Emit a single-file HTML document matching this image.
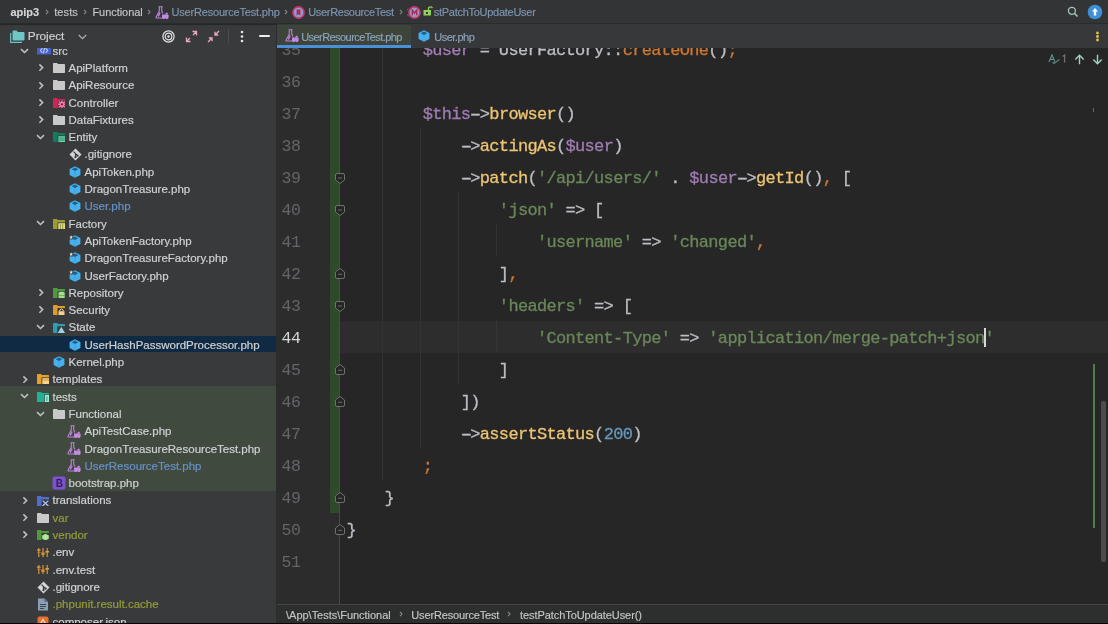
<!DOCTYPE html>
<html><head><meta charset="utf-8">
<style>
*{margin:0;padding:0;box-sizing:border-box}
html,body{width:1108px;height:624px;overflow:hidden;background:#262626;font-family:"Liberation Sans",sans-serif}
.abs{position:absolute}
svg{display:block}
.row{width:277px;height:17.3px}
.tt{position:absolute;top:1px;white-space:pre;font-size:11.5px;line-height:17.3px;-webkit-text-stroke:0.2px currentColor}
.code{position:absolute;left:69.5px;white-space:pre;font-family:"Liberation Mono",monospace;font-size:17px;letter-spacing:-0.68px;line-height:32px;padding-top:3px;-webkit-text-stroke:0.3px currentColor}
.ln{position:absolute;left:4.6px;white-space:pre;font-family:"Liberation Mono",monospace;font-size:16.5px;letter-spacing:-0.44px;line-height:32px;padding-top:3px}
.lg{display:inline-block;transform:scaleX(1.75)}
.caret{display:inline-block;width:1.5px;height:19px;background:#d8d8d8;vertical-align:-4px;margin-right:-1.5px}
.tb{position:absolute;z-index:5;white-space:pre;-webkit-text-stroke:0.15px currentColor;font-size:11px;line-height:14px;color:#c4c6c8}
</style></head><body><div style="position:absolute;left:0;top:0;width:1108px;height:624px;overflow:hidden;will-change:transform">
<!-- top breadcrumb bar -->
<div class="abs" style="left:0;top:0;width:1108px;height:24px;background:#333436;border-bottom:1px solid #2a2b2c"></div>
<div class="tb" style="left:10.4px;top:5.4px;font-size:11px;font-weight:bold;color:#d4d6d8;letter-spacing:-0.009px">apip3</div><div class="tb" style="left:54.2px;top:5.4px;font-size:11px;font-weight:normal;color:#c4c6c8;letter-spacing:0.091px">tests</div><div class="tb" style="left:92.4px;top:5.4px;font-size:11px;font-weight:normal;color:#c4c6c8;letter-spacing:-0.041px">Functional</div><div class="tb" style="left:171.5px;top:5.4px;font-size:11px;font-weight:normal;color:#7f96b0;letter-spacing:-0.189px">UserResourceTest.php</div><div class="tb" style="left:308.2px;top:5.4px;font-size:11px;font-weight:normal;color:#7f96b0;letter-spacing:-0.306px">UserResourceTest</div><div class="tb" style="left:433.8px;top:5.4px;font-size:11px;font-weight:normal;color:#7f96b0;letter-spacing:-0.278px">stPatchToUpdateUser</div><div class="tb" style="left:27.8px;top:29.4px;font-size:11.8px;font-weight:normal;color:#d2d4d6;letter-spacing:-0.036px">Project</div><div class="tb" style="left:301.2px;top:29.5px;font-size:11px;font-weight:normal;color:#8ea3bb;letter-spacing:-0.563px">UserResourceTest.php</div><div class="tb" style="left:434.2px;top:29.5px;font-size:11px;font-weight:normal;color:#8ea3bb;letter-spacing:-0.490px">User.php</div><div class="tb" style="left:286.1px;top:607.5px;font-size:11px;font-weight:normal;color:#c4c6c8;letter-spacing:-0.029px">\App\Tests\Functional</div><div class="tb" style="left:411.3px;top:607.5px;font-size:11px;font-weight:normal;color:#c4c6c8;letter-spacing:-0.159px">UserResourceTest</div><div class="tb" style="left:520px;top:607.5px;font-size:11px;font-weight:normal;color:#c4c6c8;letter-spacing:-0.068px">testPatchToUpdateUser()</div>
<svg class="abs" style="left:44.8px;top:9px" width="4" height="6" viewBox="0 0 4 6"><path d="M1 0.8 L3 3 L1 5.2" stroke="#8a8c8e" stroke-width="1.1" fill="none"/></svg>
<svg class="abs" style="left:82.5px;top:9px" width="4" height="6" viewBox="0 0 4 6"><path d="M1 0.8 L3 3 L1 5.2" stroke="#8a8c8e" stroke-width="1.1" fill="none"/></svg>
<svg class="abs" style="left:147px;top:9px" width="4" height="6" viewBox="0 0 4 6"><path d="M1 0.8 L3 3 L1 5.2" stroke="#8a8c8e" stroke-width="1.1" fill="none"/></svg>
<div class="abs" style="left:155px;top:6px;line-height:0"><svg width="14" height="13" viewBox="0 0 14 13"><path d="M3.5 0.8 H7.5 M4.3 0.8 V5 L1 11.2 Q0.8 12 1.6 12 H7" stroke="#b783d8" stroke-width="1.1" fill="none"/><path d="M6.7 0.8 V5 L8 7.5" stroke="#b783d8" stroke-width="1.1" fill="none"/><path d="M2.6 9.5 L4.8 5.8 L5.6 7.4 L3.5 11.3 Z" fill="#b783d8"/><path d="M7 8.4 H12.6 Q13.6 8.4 13.6 9.6 V11.4 Q13.6 12.4 12.6 12.4 H7 Z" fill="#c38ae0"/><circle cx="8.6" cy="12.2" r="1" fill="#c38ae0"/><circle cx="12" cy="12.2" r="1" fill="#c38ae0"/><path d="M10 8.4 L11 6.8 H12.4 L13.2 8.4" fill="#c38ae0"/></svg></div>
<svg class="abs" style="left:284.4px;top:9px" width="4" height="6" viewBox="0 0 4 6"><path d="M1 0.8 L3 3 L1 5.2" stroke="#8a8c8e" stroke-width="1.1" fill="none"/></svg>
<div class="abs" style="left:292px;top:6px;line-height:0"><svg width="13" height="13" viewBox="0 0 13 13"><circle cx="6.5" cy="6.5" r="5.6" fill="#8f9bd0" stroke="#c8386a" stroke-width="1.6"/><path d="M4.6 3.4 H8.4 V9.6 L6.5 8.2 L4.6 9.6 Z" fill="#b02a50"/></svg></div>
<svg class="abs" style="left:399px;top:9px" width="4" height="6" viewBox="0 0 4 6"><path d="M1 0.8 L3 3 L1 5.2" stroke="#8a8c8e" stroke-width="1.1" fill="none"/></svg>
<div class="abs" style="left:407px;top:6px;line-height:0"><svg width="14" height="13" viewBox="0 0 14 13"><path d="M1.2 2.5 L0.4 4.5 M0.6 8 L1.3 10.2" stroke="#c8386a" stroke-width="1"/><circle cx="7.5" cy="6.5" r="5.6" fill="#8f9bd0" stroke="#c8386a" stroke-width="1.6"/><path d="M5.3 9.2 V4.2 L7.5 7 L9.7 4.2 V9.2" stroke="#b02a50" stroke-width="1.4" fill="none"/></svg></div>
<div class="abs" style="left:423px;top:5px;line-height:0"><svg width="10" height="11" viewBox="0 0 10 11"><rect x="0.5" y="5" width="7.5" height="5.5" fill="#8fcf5a"/><path d="M5.5 5 V3 Q7.5 0.6 9.5 3" stroke="#8fcf5a" stroke-width="1.3" fill="none"/><rect x="3" y="7" width="2" height="2" fill="#36373a"/></svg></div>
<svg class="abs" style="left:1066px;top:5px" width="14" height="14" viewBox="0 0 14 14"><circle cx="5.9" cy="5.8" r="3.5" stroke="#9fc4bd" stroke-width="1.3" fill="none"/><path d="M8.5 8.4 L11.6 11.5" stroke="#9fc4bd" stroke-width="1.5"/></svg>
<svg class="abs" style="left:1087px;top:4px" width="16" height="16" viewBox="0 0 16 16"><circle cx="8" cy="8" r="7.3" fill="#3d8fd8"/><path d="M8 4 L11 7.4 H9.2 V11.5 H6.8 V7.4 H5 Z" fill="#ffffff"/></svg>

<!-- project header -->
<div class="abs" style="left:0;top:25px;width:277px;height:23px;background:#393a3c"></div>
<svg class="abs" style="left:10px;top:30px" width="15" height="13" viewBox="0 0 15 13"><path d="M0.7 3 V12.3 H12" stroke="#6ec6c6" stroke-width="1.2" fill="none"/><path d="M2.5 1.5 Q2.5 0.6 3.4 0.6 H6.6 L7.8 2 H13.6 Q14.5 2 14.5 2.9 V9.6 Q14.5 10.5 13.6 10.5 H3.4 Q2.5 10.5 2.5 9.6 Z" fill="#6ec6c6"/></svg>
<svg class="abs" style="left:78px;top:34px" width="9" height="6" viewBox="0 0 9 6"><path d="M0.8 1 L4.5 4.7 L8.2 1" stroke="#b0b2b4" stroke-width="1.2" fill="none"/></svg>
<svg class="abs" style="left:162px;top:30px" width="13" height="13" viewBox="0 0 13 13"><circle cx="6.5" cy="6.5" r="5.6" stroke="#e4e4e4" stroke-width="1.2" fill="none"/><circle cx="6.5" cy="6.5" r="3.3" stroke="#e4e4e4" stroke-width="1.2" fill="none"/><circle cx="6.5" cy="6.5" r="1.2" fill="#e4e4e4"/></svg>
<svg class="abs" style="left:185px;top:30px" width="13" height="13" viewBox="0 0 13 13"><path d="M1.5 11.5 L5 8 M1.5 7.5 V11.5 H5.5 M11.5 1.5 L8 5 M7.5 1.5 H11.5 V5.5" stroke="#e9a7bd" stroke-width="1.3" fill="none"/></svg>
<svg class="abs" style="left:207px;top:30px" width="13" height="13" viewBox="0 0 13 13"><path d="M1 12 L5 8 M1.8 8 H5 V11.2 M12 1 L8 5 M8 1.8 V5 H11.2" stroke="#e9a7bd" stroke-width="1.3" fill="none"/></svg>
<div class="abs" style="left:228px;top:29px;width:1px;height:14px;background:#4a4c4e"></div>
<svg class="abs" style="left:240px;top:30px" width="4" height="13" viewBox="0 0 4 13"><circle cx="2" cy="2" r="1.3" fill="#e6e6e6"/><circle cx="2" cy="6.5" r="1.3" fill="#e6e6e6"/><circle cx="2" cy="11" r="1.3" fill="#e6e6e6"/></svg>
<div class="abs" style="left:259px;top:35px;width:11px;height:2.4px;border-radius:1px;background:#eeeeee"></div>

<!-- tabs bar -->
<div class="abs" style="left:277px;top:24px;width:831px;height:24px;background:#37383a"></div>
<div class="abs" style="left:277px;top:25px;width:134px;height:23px;background:#3d4439"></div>
<div class="abs" style="left:277px;top:45.3px;width:134px;height:2.7px;background:#4a8fd8"></div>
<div class="abs" style="left:285px;top:29px;line-height:0"><svg width="14" height="13" viewBox="0 0 14 13"><path d="M3.5 0.8 H7.5 M4.3 0.8 V5 L1 11.2 Q0.8 12 1.6 12 H7" stroke="#b783d8" stroke-width="1.1" fill="none"/><path d="M6.7 0.8 V5 L8 7.5" stroke="#b783d8" stroke-width="1.1" fill="none"/><path d="M2.6 9.5 L4.8 5.8 L5.6 7.4 L3.5 11.3 Z" fill="#b783d8"/><path d="M7 8.4 H12.6 Q13.6 8.4 13.6 9.6 V11.4 Q13.6 12.4 12.6 12.4 H7 Z" fill="#c38ae0"/><circle cx="8.6" cy="12.2" r="1" fill="#c38ae0"/><circle cx="12" cy="12.2" r="1" fill="#c38ae0"/><path d="M10 8.4 L11 6.8 H12.4 L13.2 8.4" fill="#c38ae0"/></svg></div>
<div class="abs" style="left:418px;top:30px;line-height:0"><svg width="12" height="12" viewBox="0 0 12 12"><path d="M6 0.3 L11.4 3.1 V8.9 L6 11.7 L0.6 8.9 V3.1 Z" fill="#46b1ec"/><path d="M6 1.6 L9.2 3.3 L6 5 L2.8 3.3 Z" fill="#1c5e8c"/><path d="M6 5 V11.5" stroke="#3a9ad6" stroke-width="0.7"/></svg></div>
<svg class="abs" style="left:1095px;top:31px" width="5" height="11" viewBox="0 0 5 11"><circle cx="2.5" cy="2" r="1.4" fill="#e3c43c"/><circle cx="2.5" cy="5.5" r="1.4" fill="#e3c43c"/><circle cx="2.5" cy="9" r="1.4" fill="#e3c43c"/></svg>

<!-- project tree -->
<div class="abs" style="left:0;top:48px;width:277px;height:576px;background:#393a3c;overflow:hidden">
<div class="abs" style="left:0;top:338.30px;width:276px;height:105.10px;background:#404a3f"></div><div class="abs" style="left:0;top:288.10px;width:276px;height:16.2px;background:#0f2a42"></div><div class="abs row" style="left:0;top:-6.40px"><div class="abs" style="left:19.700000000000003px;top:5.9px"><svg width="9" height="6" viewBox="0 0 9 6"><path d="M1 1.1 L4.5 4.5 L8 1.1" stroke="#bfc1c3" stroke-width="1.5" fill="none"/></svg></div><div class="abs" style="left:36.8px;top:4.70px;line-height:0"><svg width="14" height="9" viewBox="0 0 14 9"><path d="M0 0.5 H14 V8.5 H0 Z" fill="#4760c8"/><path d="M5.4 2 L3.4 4.5 L5.4 7 M8.6 2 L10.6 4.5 L8.6 7 M7.6 1.6 L6.4 7.4" stroke="#c3cfff" stroke-width="1.1" fill="none"/></svg></div><div class="tt" style="left:52.5px;color:#cfd1d3">src</div></div><div class="abs row" style="left:0;top:10.90px"><div class="abs" style="left:36.8px;top:4.4px"><svg width="8" height="9" viewBox="0 0 8 9"><path d="M2.4 1.4 L5.7 4.6 L2.4 7.8" stroke="#bfc1c3" stroke-width="1.5" fill="none"/></svg></div><div class="abs" style="left:52.8px;top:4.20px;line-height:0"><svg width="12" height="10" viewBox="0 0 12 10"><path d="M0 0.7 Q0 0 0.7 0 H4 L5 1.1 H11.3 Q12 1.1 12 1.8 V9.3 Q12 10 11.3 10 H0.7 Q0 10 0 9.3 Z" fill="#c9c9c9"/></svg></div><div class="tt" style="left:68.5px;color:#cfd1d3">ApiPlatform</div></div><div class="abs row" style="left:0;top:28.20px"><div class="abs" style="left:36.8px;top:4.4px"><svg width="8" height="9" viewBox="0 0 8 9"><path d="M2.4 1.4 L5.7 4.6 L2.4 7.8" stroke="#bfc1c3" stroke-width="1.5" fill="none"/></svg></div><div class="abs" style="left:52.8px;top:4.20px;line-height:0"><svg width="12" height="10" viewBox="0 0 12 10"><path d="M0 0.7 Q0 0 0.7 0 H4 L5 1.1 H11.3 Q12 1.1 12 1.8 V9.3 Q12 10 11.3 10 H0.7 Q0 10 0 9.3 Z" fill="#c9c9c9"/></svg></div><div class="tt" style="left:68.5px;color:#cfd1d3">ApiResource</div></div><div class="abs row" style="left:0;top:45.50px"><div class="abs" style="left:36.8px;top:4.4px"><svg width="8" height="9" viewBox="0 0 8 9"><path d="M2.4 1.4 L5.7 4.6 L2.4 7.8" stroke="#bfc1c3" stroke-width="1.5" fill="none"/></svg></div><div class="abs" style="left:52.8px;top:4.20px;line-height:0"><svg width="12" height="10" viewBox="0 0 12 10"><path d="M0 0.7 Q0 0 0.7 0 H4 L5 1.1 H11.3 Q12 1.1 12 1.8 V9.3 Q12 10 11.3 10 H0.7 Q0 10 0 9.3 Z" fill="#cf2458"/><circle cx="9" cy="6.3" r="4.3" fill="#393a3c"/><path d="M9 2.4 V10.2 M5.1 6.3 H12.9 M6.2 3.5 L11.8 9.1 M11.8 3.5 L6.2 9.1" stroke="#f47aa8" stroke-width="1.5"/><circle cx="9" cy="6.3" r="2.5" fill="#f47aa8"/><circle cx="9" cy="6.3" r="1.1" fill="#7a1436"/></svg></div><div class="tt" style="left:68.5px;color:#cfd1d3">Controller</div></div><div class="abs row" style="left:0;top:62.80px"><div class="abs" style="left:36.8px;top:4.4px"><svg width="8" height="9" viewBox="0 0 8 9"><path d="M2.4 1.4 L5.7 4.6 L2.4 7.8" stroke="#bfc1c3" stroke-width="1.5" fill="none"/></svg></div><div class="abs" style="left:52.8px;top:4.20px;line-height:0"><svg width="12" height="10" viewBox="0 0 12 10"><path d="M0 0.7 Q0 0 0.7 0 H4 L5 1.1 H11.3 Q12 1.1 12 1.8 V9.3 Q12 10 11.3 10 H0.7 Q0 10 0 9.3 Z" fill="#c9c9c9"/></svg></div><div class="tt" style="left:68.5px;color:#cfd1d3">DataFixtures</div></div><div class="abs row" style="left:0;top:80.10px"><div class="abs" style="left:35.7px;top:5.9px"><svg width="9" height="6" viewBox="0 0 9 6"><path d="M1 1.1 L4.5 4.5 L8 1.1" stroke="#bfc1c3" stroke-width="1.5" fill="none"/></svg></div><div class="abs" style="left:52.8px;top:4.20px;line-height:0"><svg width="12" height="10" viewBox="0 0 12 10"><path d="M0 0.7 Q0 0 0.7 0 H4 L5 1.1 H11.3 Q12 1.1 12 1.8 V9.3 Q12 10 11.3 10 H0.7 Q0 10 0 9.3 Z" fill="#137c5e"/><rect x="4.5" y="3.4" width="8" height="7" fill="#393a3c"/><rect x="5.3" y="4.2" width="6.7" height="5.8" rx="0.4" fill="#70dcb2"/><path d="M5.5 6.1 H11.8 M5.5 8.1 H11.8" stroke="#1d6a50" stroke-width="0.8"/></svg></div><div class="tt" style="left:68.5px;color:#cfd1d3">Entity</div></div><div class="abs row" style="left:0;top:97.40px"><div class="abs" style="left:68.8px;top:2.70px;line-height:0"><svg width="13" height="13" viewBox="0 0 13 13"><path d="M6.5 0.5 L12.5 6.5 L6.5 12.5 L0.5 6.5 Z" fill="#d4d4d4"/><path d="M4.5 3.6 L8.6 7.7 M6.5 5.6 V9.2" stroke="#393a3c" stroke-width="1.2"/><circle cx="6.5" cy="9.2" r="1.1" fill="#393a3c"/><circle cx="8.6" cy="7.7" r="1.1" fill="#393a3c"/></svg></div><div class="tt" style="left:84.5px;color:#cfd1d3">.gitignore</div></div><div class="abs row" style="left:0;top:114.70px"><div class="abs" style="left:68.8px;top:3.20px;line-height:0"><svg width="12" height="12" viewBox="0 0 12 12"><path d="M6 0.3 L11.4 3.1 V8.9 L6 11.7 L0.6 8.9 V3.1 Z" fill="#46b1ec"/><path d="M6 1.6 L9.2 3.3 L6 5 L2.8 3.3 Z" fill="#1c5e8c"/><path d="M6 5 V11.5" stroke="#3a9ad6" stroke-width="0.7"/></svg></div><div class="tt" style="left:84.5px;color:#cfd1d3">ApiToken.php</div></div><div class="abs row" style="left:0;top:132.00px"><div class="abs" style="left:68.8px;top:3.20px;line-height:0"><svg width="12" height="12" viewBox="0 0 12 12"><path d="M6 0.3 L11.4 3.1 V8.9 L6 11.7 L0.6 8.9 V3.1 Z" fill="#46b1ec"/><path d="M6 1.6 L9.2 3.3 L6 5 L2.8 3.3 Z" fill="#1c5e8c"/><path d="M6 5 V11.5" stroke="#3a9ad6" stroke-width="0.7"/></svg></div><div class="tt" style="left:84.5px;color:#cfd1d3">DragonTreasure.php</div></div><div class="abs row" style="left:0;top:149.30px"><div class="abs" style="left:68.8px;top:3.20px;line-height:0"><svg width="12" height="12" viewBox="0 0 12 12"><path d="M6 0.3 L11.4 3.1 V8.9 L6 11.7 L0.6 8.9 V3.1 Z" fill="#46b1ec"/><path d="M6 1.6 L9.2 3.3 L6 5 L2.8 3.3 Z" fill="#1c5e8c"/><path d="M6 5 V11.5" stroke="#3a9ad6" stroke-width="0.7"/></svg></div><div class="tt" style="left:84.5px;color:#6692c6">User.php</div></div><div class="abs row" style="left:0;top:166.60px"><div class="abs" style="left:35.7px;top:5.9px"><svg width="9" height="6" viewBox="0 0 9 6"><path d="M1 1.1 L4.5 4.5 L8 1.1" stroke="#bfc1c3" stroke-width="1.5" fill="none"/></svg></div><div class="abs" style="left:52.8px;top:4.20px;line-height:0"><svg width="12" height="10" viewBox="0 0 12 10"><path d="M0 0.7 Q0 0 0.7 0 H4 L5 1.1 H11.3 Q12 1.1 12 1.8 V9.3 Q12 10 11.3 10 H0.7 Q0 10 0 9.3 Z" fill="#9d9c36"/><rect x="4.5" y="3.4" width="8" height="7" fill="#393a3c"/><rect x="5.3" y="4.2" width="6.7" height="5.8" fill="#dedb86"/><path d="M7.5 5 V10 M9.7 5 V10" stroke="#8a8930" stroke-width="0.8"/></svg></div><div class="tt" style="left:68.5px;color:#cfd1d3">Factory</div></div><div class="abs row" style="left:0;top:183.90px"><div class="abs" style="left:68.8px;top:3.20px;line-height:0"><svg width="12" height="12" viewBox="0 0 12 12"><path d="M6 0.3 L11.4 3.1 V8.9 L6 11.7 L0.6 8.9 V3.1 Z" fill="#46b1ec"/><path d="M6 1.6 L9.2 3.3 L6 5 L2.8 3.3 Z" fill="#1c5e8c"/><path d="M6 5 V11.5" stroke="#3a9ad6" stroke-width="0.7"/><path d="M0 0 H4.4 V4.4 H0 Z" fill="#393a3c"/><path d="M2.2 0.2 L2.7 1.6 L4.2 1.7 L3 2.6 L3.4 4.1 L2.2 3.3 L1 4.1 L1.4 2.6 L0.2 1.7 L1.7 1.6 Z" fill="#e6e6e6"/></svg></div><div class="tt" style="left:84.5px;color:#cfd1d3">ApiTokenFactory.php</div></div><div class="abs row" style="left:0;top:201.20px"><div class="abs" style="left:68.8px;top:3.20px;line-height:0"><svg width="12" height="12" viewBox="0 0 12 12"><path d="M6 0.3 L11.4 3.1 V8.9 L6 11.7 L0.6 8.9 V3.1 Z" fill="#46b1ec"/><path d="M6 1.6 L9.2 3.3 L6 5 L2.8 3.3 Z" fill="#1c5e8c"/><path d="M6 5 V11.5" stroke="#3a9ad6" stroke-width="0.7"/><path d="M0 0 H4.4 V4.4 H0 Z" fill="#393a3c"/><path d="M2.2 0.2 L2.7 1.6 L4.2 1.7 L3 2.6 L3.4 4.1 L2.2 3.3 L1 4.1 L1.4 2.6 L0.2 1.7 L1.7 1.6 Z" fill="#e6e6e6"/></svg></div><div class="tt" style="left:84.5px;color:#cfd1d3">DragonTreasureFactory.php</div></div><div class="abs row" style="left:0;top:218.50px"><div class="abs" style="left:68.8px;top:3.20px;line-height:0"><svg width="12" height="12" viewBox="0 0 12 12"><path d="M6 0.3 L11.4 3.1 V8.9 L6 11.7 L0.6 8.9 V3.1 Z" fill="#46b1ec"/><path d="M6 1.6 L9.2 3.3 L6 5 L2.8 3.3 Z" fill="#1c5e8c"/><path d="M6 5 V11.5" stroke="#3a9ad6" stroke-width="0.7"/><path d="M0 0 H4.4 V4.4 H0 Z" fill="#393a3c"/><path d="M2.2 0.2 L2.7 1.6 L4.2 1.7 L3 2.6 L3.4 4.1 L2.2 3.3 L1 4.1 L1.4 2.6 L0.2 1.7 L1.7 1.6 Z" fill="#e6e6e6"/></svg></div><div class="tt" style="left:84.5px;color:#cfd1d3">UserFactory.php</div></div><div class="abs row" style="left:0;top:235.80px"><div class="abs" style="left:36.8px;top:4.4px"><svg width="8" height="9" viewBox="0 0 8 9"><path d="M2.4 1.4 L5.7 4.6 L2.4 7.8" stroke="#bfc1c3" stroke-width="1.5" fill="none"/></svg></div><div class="abs" style="left:52.8px;top:4.20px;line-height:0"><svg width="12" height="10" viewBox="0 0 12 10"><path d="M0 0.7 Q0 0 0.7 0 H4 L5 1.1 H11.3 Q12 1.1 12 1.8 V9.3 Q12 10 11.3 10 H0.7 Q0 10 0 9.3 Z" fill="#4f9a3c"/><rect x="4.5" y="3.4" width="8" height="7" fill="#393a3c"/><ellipse cx="8.6" cy="5" rx="3.1" ry="1.2" fill="#a6df8c"/><rect x="5.5" y="5" width="6.2" height="4.4" fill="#a6df8c"/><ellipse cx="8.6" cy="9.4" rx="3.1" ry="1" fill="#a6df8c"/><path d="M5.5 7.1 Q8.6 8.3 11.7 7.1" stroke="#4f9a3c" stroke-width="0.7" fill="none"/></svg></div><div class="tt" style="left:68.5px;color:#cfd1d3">Repository</div></div><div class="abs row" style="left:0;top:253.10px"><div class="abs" style="left:36.8px;top:4.4px"><svg width="8" height="9" viewBox="0 0 8 9"><path d="M2.4 1.4 L5.7 4.6 L2.4 7.8" stroke="#bfc1c3" stroke-width="1.5" fill="none"/></svg></div><div class="abs" style="left:52.8px;top:4.20px;line-height:0"><svg width="12" height="10" viewBox="0 0 12 10"><path d="M0 0.7 Q0 0 0.7 0 H4 L5 1.1 H11.3 Q12 1.1 12 1.8 V9.3 Q12 10 11.3 10 H0.7 Q0 10 0 9.3 Z" fill="#e39a2c"/><rect x="4.5" y="3" width="8" height="7.5" fill="#393a3c"/><rect x="5.5" y="6.2" width="6" height="4" fill="#f3d08e"/><path d="M6.8 6.2 V5 Q8.5 2.6 10.2 5 V6.2" stroke="#f3d08e" stroke-width="1" fill="none"/></svg></div><div class="tt" style="left:68.5px;color:#cfd1d3">Security</div></div><div class="abs row" style="left:0;top:270.40px"><div class="abs" style="left:35.7px;top:5.9px"><svg width="9" height="6" viewBox="0 0 9 6"><path d="M1 1.1 L4.5 4.5 L8 1.1" stroke="#bfc1c3" stroke-width="1.5" fill="none"/></svg></div><div class="abs" style="left:52.8px;top:4.20px;line-height:0"><svg width="12" height="10" viewBox="0 0 12 10"><path d="M0 0.7 Q0 0 0.7 0 H4 L5 1.1 H11.3 Q12 1.1 12 1.8 V9.3 Q12 10 11.3 10 H0.7 Q0 10 0 9.3 Z" fill="#2e9db3"/><rect x="4.3" y="3.2" width="8" height="7.3" fill="#393a3c"/><path d="M8.3 3.8 L12 10 H4.8 Z" fill="#97d5e4"/></svg></div><div class="tt" style="left:68.5px;color:#cfd1d3">State</div></div><div class="abs row" style="left:0;top:287.70px"><div class="abs" style="left:68.8px;top:3.20px;line-height:0"><svg width="12" height="12" viewBox="0 0 12 12"><path d="M6 0.3 L11.4 3.1 V8.9 L6 11.7 L0.6 8.9 V3.1 Z" fill="#46b1ec"/><path d="M6 1.6 L9.2 3.3 L6 5 L2.8 3.3 Z" fill="#1c5e8c"/><path d="M6 5 V11.5" stroke="#3a9ad6" stroke-width="0.7"/></svg></div><div class="tt" style="left:84.5px;color:#cfd1d3">UserHashPasswordProcessor.php</div></div><div class="abs row" style="left:0;top:305.00px"><div class="abs" style="left:52.8px;top:3.20px;line-height:0"><svg width="12" height="12" viewBox="0 0 12 12"><path d="M6 0.3 L11.4 3.1 V8.9 L6 11.7 L0.6 8.9 V3.1 Z" fill="#46b1ec"/><path d="M6 1.6 L9.2 3.3 L6 5 L2.8 3.3 Z" fill="#1c5e8c"/><path d="M6 5 V11.5" stroke="#3a9ad6" stroke-width="0.7"/></svg></div><div class="tt" style="left:68.5px;color:#cfd1d3">Kernel.php</div></div><div class="abs row" style="left:0;top:322.30px"><div class="abs" style="left:20.799999999999997px;top:4.4px"><svg width="8" height="9" viewBox="0 0 8 9"><path d="M2.4 1.4 L5.7 4.6 L2.4 7.8" stroke="#bfc1c3" stroke-width="1.5" fill="none"/></svg></div><div class="abs" style="left:36.8px;top:4.20px;line-height:0"><svg width="12" height="10" viewBox="0 0 12 10"><path d="M0 0.7 Q0 0 0.7 0 H4 L5 1.1 H11.3 Q12 1.1 12 1.8 V9.3 Q12 10 11.3 10 H0.7 Q0 10 0 9.3 Z" fill="#e6a126"/><rect x="4.5" y="3.4" width="8" height="7" fill="#393a3c"/><rect x="5.3" y="4.2" width="6.7" height="5.8" fill="#f9d48a"/><path d="M5.3 6 H12" stroke="#c98a1c" stroke-width="0.8"/></svg></div><div class="tt" style="left:52.5px;color:#cfd1d3">templates</div></div><div class="abs row" style="left:0;top:339.60px"><div class="abs" style="left:19.700000000000003px;top:5.9px"><svg width="9" height="6" viewBox="0 0 9 6"><path d="M1 1.1 L4.5 4.5 L8 1.1" stroke="#bfc1c3" stroke-width="1.5" fill="none"/></svg></div><div class="abs" style="left:36.8px;top:4.20px;line-height:0"><svg width="12" height="10" viewBox="0 0 12 10"><path d="M0 0.7 Q0 0 0.7 0 H4 L5 1.1 H11.3 Q12 1.1 12 1.8 V9.3 Q12 10 11.3 10 H0.7 Q0 10 0 9.3 Z" fill="#1fb29a"/><rect x="7" y="2.4" width="5.5" height="8" fill="#404a3f"/><rect x="7.8" y="3" width="4.2" height="7" fill="#98e9d6"/><path d="M9.9 4.5 V9" stroke="#1a8a78" stroke-width="0.8"/></svg></div><div class="tt" style="left:52.5px;color:#cfd1d3">tests</div></div><div class="abs row" style="left:0;top:356.90px"><div class="abs" style="left:35.7px;top:5.9px"><svg width="9" height="6" viewBox="0 0 9 6"><path d="M1 1.1 L4.5 4.5 L8 1.1" stroke="#bfc1c3" stroke-width="1.5" fill="none"/></svg></div><div class="abs" style="left:52.8px;top:4.20px;line-height:0"><svg width="12" height="10" viewBox="0 0 12 10"><path d="M0 0.7 Q0 0 0.7 0 H4 L5 1.1 H11.3 Q12 1.1 12 1.8 V9.3 Q12 10 11.3 10 H0.7 Q0 10 0 9.3 Z" fill="#c9c9c9"/></svg></div><div class="tt" style="left:68.5px;color:#cfd1d3">Functional</div></div><div class="abs row" style="left:0;top:374.20px"><div class="abs" style="left:67.3px;top:2.70px;line-height:0"><svg width="14" height="13" viewBox="0 0 14 13"><path d="M3.5 0.8 H7.5 M4.3 0.8 V5 L1 11.2 Q0.8 12 1.6 12 H7" stroke="#b783d8" stroke-width="1.1" fill="none"/><path d="M6.7 0.8 V5 L8 7.5" stroke="#b783d8" stroke-width="1.1" fill="none"/><path d="M2.6 9.5 L4.8 5.8 L5.6 7.4 L3.5 11.3 Z" fill="#b783d8"/><path d="M7 8.4 H12.6 Q13.6 8.4 13.6 9.6 V11.4 Q13.6 12.4 12.6 12.4 H7 Z" fill="#c38ae0"/><circle cx="8.6" cy="12.2" r="1" fill="#c38ae0"/><circle cx="12" cy="12.2" r="1" fill="#c38ae0"/><path d="M10 8.4 L11 6.8 H12.4 L13.2 8.4" fill="#c38ae0"/></svg></div><div class="tt" style="left:84.5px;color:#cfd1d3">ApiTestCase.php</div></div><div class="abs row" style="left:0;top:391.50px"><div class="abs" style="left:67.3px;top:2.70px;line-height:0"><svg width="14" height="13" viewBox="0 0 14 13"><path d="M3.5 0.8 H7.5 M4.3 0.8 V5 L1 11.2 Q0.8 12 1.6 12 H7" stroke="#b783d8" stroke-width="1.1" fill="none"/><path d="M6.7 0.8 V5 L8 7.5" stroke="#b783d8" stroke-width="1.1" fill="none"/><path d="M2.6 9.5 L4.8 5.8 L5.6 7.4 L3.5 11.3 Z" fill="#b783d8"/><path d="M7 8.4 H12.6 Q13.6 8.4 13.6 9.6 V11.4 Q13.6 12.4 12.6 12.4 H7 Z" fill="#c38ae0"/><circle cx="8.6" cy="12.2" r="1" fill="#c38ae0"/><circle cx="12" cy="12.2" r="1" fill="#c38ae0"/><path d="M10 8.4 L11 6.8 H12.4 L13.2 8.4" fill="#c38ae0"/></svg></div><div class="tt" style="left:84.5px;color:#cfd1d3">DragonTreasureResourceTest.php</div></div><div class="abs row" style="left:0;top:408.80px"><div class="abs" style="left:67.3px;top:2.70px;line-height:0"><svg width="14" height="13" viewBox="0 0 14 13"><path d="M3.5 0.8 H7.5 M4.3 0.8 V5 L1 11.2 Q0.8 12 1.6 12 H7" stroke="#b783d8" stroke-width="1.1" fill="none"/><path d="M6.7 0.8 V5 L8 7.5" stroke="#b783d8" stroke-width="1.1" fill="none"/><path d="M2.6 9.5 L4.8 5.8 L5.6 7.4 L3.5 11.3 Z" fill="#b783d8"/><path d="M7 8.4 H12.6 Q13.6 8.4 13.6 9.6 V11.4 Q13.6 12.4 12.6 12.4 H7 Z" fill="#c38ae0"/><circle cx="8.6" cy="12.2" r="1" fill="#c38ae0"/><circle cx="12" cy="12.2" r="1" fill="#c38ae0"/><path d="M10 8.4 L11 6.8 H12.4 L13.2 8.4" fill="#c38ae0"/></svg></div><div class="tt" style="left:84.5px;color:#6692c6">UserResourceTest.php</div></div><div class="abs row" style="left:0;top:426.10px"><div class="abs" style="left:52.0px;top:2.20px;line-height:0"><svg width="14" height="14" viewBox="0 0 14 14"><rect x="0.5" y="0.5" width="13" height="13" rx="2" fill="#7f50cf"/><path d="M4.5 3 H8 Q10.2 3 10.2 5 Q10.2 6.6 8.6 6.9 Q10.7 7.2 10.7 9 Q10.7 11 8.3 11 H4.5 Z M5.9 4.2 V6.4 H7.8 Q8.8 6.4 8.8 5.3 Q8.8 4.2 7.8 4.2 Z M5.9 7.5 V9.8 H8 Q9.2 9.8 9.2 8.65 Q9.2 7.5 8 7.5 Z" fill="#2c1e4a" fill-rule="evenodd"/></svg></div><div class="tt" style="left:68.5px;color:#cfd1d3">bootstrap.php</div></div><div class="abs row" style="left:0;top:443.40px"><div class="abs" style="left:20.799999999999997px;top:4.4px"><svg width="8" height="9" viewBox="0 0 8 9"><path d="M2.4 1.4 L5.7 4.6 L2.4 7.8" stroke="#bfc1c3" stroke-width="1.5" fill="none"/></svg></div><div class="abs" style="left:36.8px;top:4.20px;line-height:0"><svg width="12" height="10" viewBox="0 0 12 10"><path d="M0 0.7 Q0 0 0.7 0 H4 L5 1.1 H11.3 Q12 1.1 12 1.8 V9.3 Q12 10 11.3 10 H0.7 Q0 10 0 9.3 Z" fill="#4f6fd0"/><rect x="4.5" y="3.4" width="8" height="7" fill="#393a3c"/><path d="M5.6 4.6 L11.4 10 M11.4 4.6 L5.6 10" stroke="#b6c6ff" stroke-width="1.2"/></svg></div><div class="tt" style="left:52.5px;color:#cfd1d3">translations</div></div><div class="abs row" style="left:0;top:460.70px"><div class="abs" style="left:20.799999999999997px;top:4.4px"><svg width="8" height="9" viewBox="0 0 8 9"><path d="M2.4 1.4 L5.7 4.6 L2.4 7.8" stroke="#bfc1c3" stroke-width="1.5" fill="none"/></svg></div><div class="abs" style="left:36.8px;top:4.20px;line-height:0"><svg width="12" height="10" viewBox="0 0 12 10"><path d="M0 0.7 Q0 0 0.7 0 H4 L5 1.1 H11.3 Q12 1.1 12 1.8 V9.3 Q12 10 11.3 10 H0.7 Q0 10 0 9.3 Z" fill="#c9c9c9"/></svg></div><div class="tt" style="left:52.5px;color:#949c3a">var</div></div><div class="abs row" style="left:0;top:478.00px"><div class="abs" style="left:20.799999999999997px;top:4.4px"><svg width="8" height="9" viewBox="0 0 8 9"><path d="M2.4 1.4 L5.7 4.6 L2.4 7.8" stroke="#bfc1c3" stroke-width="1.5" fill="none"/></svg></div><div class="abs" style="left:36.8px;top:4.20px;line-height:0"><svg width="12" height="10" viewBox="0 0 12 10"><path d="M0 0.7 Q0 0 0.7 0 H4 L5 1.1 H11.3 Q12 1.1 12 1.8 V9.3 Q12 10 11.3 10 H0.7 Q0 10 0 9.3 Z" fill="#4f9a3c"/><rect x="4.5" y="3" width="8" height="7.5" fill="#393a3c"/><path d="M8.5 3.8 L11.8 5.5 V8.8 L8.5 10.4 L5.2 8.8 V5.5 Z" fill="#aee797"/></svg></div><div class="tt" style="left:52.5px;color:#949c3a">vendor</div></div><div class="abs row" style="left:0;top:495.30px"><div class="abs" style="left:36.8px;top:4.70px;line-height:0"><svg width="12" height="9" viewBox="0 0 12 9"><path d="M1.8 0 V9 M6 0 V9 M10.2 0 V9" stroke="#e39b3e" stroke-width="1.1"/><path d="M0 2.2 H3.6 M4.2 6 H7.8 M8.4 3.6 H12" stroke="#e39b3e" stroke-width="1.3"/><path d="M0 4.6 H12" stroke="#e39b3e" stroke-width="0.7" opacity="0.6"/></svg></div><div class="tt" style="left:52.5px;color:#cfd1d3">.env</div></div><div class="abs row" style="left:0;top:512.60px"><div class="abs" style="left:36.8px;top:4.70px;line-height:0"><svg width="12" height="9" viewBox="0 0 12 9"><path d="M1.8 0 V9 M6 0 V9 M10.2 0 V9" stroke="#e39b3e" stroke-width="1.1"/><path d="M0 2.2 H3.6 M4.2 6 H7.8 M8.4 3.6 H12" stroke="#e39b3e" stroke-width="1.3"/><path d="M0 4.6 H12" stroke="#e39b3e" stroke-width="0.7" opacity="0.6"/></svg></div><div class="tt" style="left:52.5px;color:#cfd1d3">.env.test</div></div><div class="abs row" style="left:0;top:529.90px"><div class="abs" style="left:36.8px;top:2.70px;line-height:0"><svg width="13" height="13" viewBox="0 0 13 13"><path d="M6.5 0.5 L12.5 6.5 L6.5 12.5 L0.5 6.5 Z" fill="#d4d4d4"/><path d="M4.5 3.6 L8.6 7.7 M6.5 5.6 V9.2" stroke="#393a3c" stroke-width="1.2"/><circle cx="6.5" cy="9.2" r="1.1" fill="#393a3c"/><circle cx="8.6" cy="7.7" r="1.1" fill="#393a3c"/></svg></div><div class="tt" style="left:52.5px;color:#cfd1d3">.gitignore</div></div><div class="abs row" style="left:0;top:547.20px"><div class="abs" style="left:36.8px;top:2.70px;line-height:0"><svg width="12" height="13" viewBox="0 0 12 13"><path d="M1 0.5 H7.5 L11 4 V12.5 H1 Z" fill="#8a9fb5"/><path d="M7.5 0.5 V4 H11" fill="#5d6e80"/><path d="M3 6.5 H9 M3 8.5 H9 M3 10.5 H7" stroke="#393a3c" stroke-width="0.9"/></svg></div><div class="tt" style="left:52.5px;color:#949c3a">.phpunit.result.cache</div></div><div class="abs row" style="left:0;top:564.50px"><div class="abs" style="left:36.8px;top:3.20px;line-height:0"><svg width="12" height="12" viewBox="0 0 12 12"><rect x="0.5" y="0.5" width="11" height="11" rx="2" fill="#e8702f"/><path d="M3 8.5 L6 3.5 L9 8.5" stroke="#ffd9c2" stroke-width="1.3" fill="none"/></svg></div><div class="tt" style="left:52.5px;color:#cfd1d3">composer.json</div></div>
</div>
<div class="abs" style="left:276px;top:25px;width:1px;height:599px;background:#2b2c2e"></div>

<!-- editor -->
<div class="abs" style="left:277px;top:48px;width:831px;height:556px;background:#262626;overflow:hidden">
  <div class="abs" style="left:0;top:0;width:62px;height:556px;background:#2c2c2c"></div>
  <div class="abs" style="left:63px;top:272.5px;width:831px;height:32.5px;background:#2d2d2d"></div>
  <div class="abs" style="left:53px;top:0;width:9.5px;height:465px;background:#2f4a2b"></div>
  <div class="abs" style="left:62px;top:0;width:1px;height:556px;background:#484848"></div>
  <div class="abs" style="left:105px;top:0;width:1px;height:432px;background:#333333"></div>
  <div class="abs" style="left:143px;top:80px;width:1px;height:320px;background:#333333"></div>
  <div class="abs" style="left:181px;top:144px;width:1px;height:192px;background:#333333"></div>
  <div class="abs" style="left:219px;top:176px;width:1px;height:32px;background:#333333"></div>
  <div class="abs" style="left:219px;top:272px;width:1px;height:32px;background:#363636"></div>
  <div class="ln" style="top:-16px;color:#636568">35</div><div class="code" style="top:-16px"><span style="color:#bcbec4">        </span><span style="color:#a07cb4">$user</span><span style="color:#bcbec4"> = UserFactory::</span><span style="color:#cc7832">createOne</span><span style="color:#bcbec4">()</span><span style="color:#cc7832">;</span></div><div class="ln" style="top:16px;color:#636568">36</div><div class="code" style="top:16px"></div><div class="ln" style="top:48px;color:#636568">37</div><div class="code" style="top:48px"><span style="color:#bcbec4">        </span><span style="color:#a07cb4">$this</span><span style="color:#bcbec4"><span class="lg">-</span>&gt;</span><span style="color:#edc472">browser</span><span style="color:#bcbec4">()</span></div><div class="ln" style="top:80px;color:#636568">38</div><div class="code" style="top:80px"><span style="color:#bcbec4">            <span class="lg">-</span>&gt;</span><span style="color:#edc472">actingAs</span><span style="color:#bcbec4">(</span><span style="color:#a07cb4">$user</span><span style="color:#bcbec4">)</span></div><div class="ln" style="top:112px;color:#636568">39</div><div class="code" style="top:112px"><span style="color:#bcbec4">            <span class="lg">-</span>&gt;</span><span style="color:#edc472">patch</span><span style="color:#bcbec4">(</span><span style="color:#6a8759">&#x27;/api/users/&#x27;</span><span style="color:#bcbec4"> . </span><span style="color:#a07cb4">$user</span><span style="color:#bcbec4"><span class="lg">-</span>&gt;</span><span style="color:#edc472">getId</span><span style="color:#bcbec4">()</span><span style="color:#cc7832">,</span><span style="color:#bcbec4"> [</span></div><div class="ln" style="top:144px;color:#636568">40</div><div class="code" style="top:144px"><span style="color:#bcbec4">                </span><span style="color:#6a8759">&#x27;json&#x27;</span><span style="color:#bcbec4"> =&gt; [</span></div><div class="ln" style="top:176px;color:#636568">41</div><div class="code" style="top:176px"><span style="color:#bcbec4">                    </span><span style="color:#6a8759">&#x27;username&#x27;</span><span style="color:#bcbec4"> =&gt; </span><span style="color:#6a8759">&#x27;changed&#x27;</span><span style="color:#cc7832">,</span></div><div class="ln" style="top:208px;color:#636568">42</div><div class="code" style="top:208px"><span style="color:#bcbec4">                ]</span><span style="color:#cc7832">,</span></div><div class="ln" style="top:240px;color:#636568">43</div><div class="code" style="top:240px"><span style="color:#bcbec4">                </span><span style="color:#6a8759">&#x27;headers&#x27;</span><span style="color:#bcbec4"> =&gt; [</span></div><div class="ln" style="top:272px;color:#d4d6d8">44</div><div class="code" style="top:272px"><span style="color:#bcbec4">                    </span><span style="color:#6a8759">&#x27;Content-Type&#x27;</span><span style="color:#bcbec4"> =&gt; </span><span style="color:#6a8759">&#x27;application/merge-patch+json</span><span class="caret"></span><span style="color:#6a8759">&#x27;</span></div><div class="ln" style="top:304px;color:#636568">45</div><div class="code" style="top:304px"><span style="color:#bcbec4">                ]</span></div><div class="ln" style="top:336px;color:#636568">46</div><div class="code" style="top:336px"><span style="color:#bcbec4">            ])</span></div><div class="ln" style="top:368px;color:#636568">47</div><div class="code" style="top:368px"><span style="color:#bcbec4">            <span class="lg">-</span>&gt;</span><span style="color:#edc472">assertStatus</span><span style="color:#bcbec4">(</span><span style="color:#6897bb">200</span><span style="color:#bcbec4">)</span></div><div class="ln" style="top:400px;color:#636568">48</div><div class="code" style="top:400px"><span style="color:#bcbec4">        </span><span style="color:#cc7832">;</span></div><div class="ln" style="top:432px;color:#636568">49</div><div class="code" style="top:432px"><span style="color:#bcbec4">    }</span></div><div class="ln" style="top:464px;color:#636568">50</div><div class="code" style="top:464px"><span style="color:#bcbec4">}</span></div><div class="ln" style="top:496px;color:#636568">51</div><div class="code" style="top:496px"></div>
  <svg class="abs" style="left:58px;top:125.00px" width="10" height="11" viewBox="0 0 10 11"><path d="M0.5 2 Q0.5 0.5 2 0.5 H8 Q9.5 0.5 9.5 2 V7 L5 10.5 L0.5 7 Z" fill="#252525" stroke="#707070" stroke-width="1"/><path d="M3 5.0 H7" stroke="#6a6a6a" stroke-width="1"/></svg><svg class="abs" style="left:58px;top:157.00px" width="10" height="11" viewBox="0 0 10 11"><path d="M0.5 2 Q0.5 0.5 2 0.5 H8 Q9.5 0.5 9.5 2 V7 L5 10.5 L0.5 7 Z" fill="#252525" stroke="#707070" stroke-width="1"/><path d="M3 5.0 H7" stroke="#6a6a6a" stroke-width="1"/></svg><svg class="abs" style="left:58px;top:219.80px" width="10" height="11" viewBox="0 0 10 11"><path d="M0.5 9 Q0.5 10.5 2 10.5 H8 Q9.5 10.5 9.5 9 V4 L5 0.5 L0.5 4 Z" fill="#252525" stroke="#707070" stroke-width="1"/><path d="M3 6.3 H7" stroke="#6a6a6a" stroke-width="1"/></svg><svg class="abs" style="left:58px;top:253.00px" width="10" height="11" viewBox="0 0 10 11"><path d="M0.5 2 Q0.5 0.5 2 0.5 H8 Q9.5 0.5 9.5 2 V7 L5 10.5 L0.5 7 Z" fill="#252525" stroke="#707070" stroke-width="1"/><path d="M3 5.0 H7" stroke="#6a6a6a" stroke-width="1"/></svg><svg class="abs" style="left:58px;top:315.80px" width="10" height="11" viewBox="0 0 10 11"><path d="M0.5 9 Q0.5 10.5 2 10.5 H8 Q9.5 10.5 9.5 9 V4 L5 0.5 L0.5 4 Z" fill="#252525" stroke="#707070" stroke-width="1"/><path d="M3 6.3 H7" stroke="#6a6a6a" stroke-width="1"/></svg><svg class="abs" style="left:58px;top:347.80px" width="10" height="11" viewBox="0 0 10 11"><path d="M0.5 9 Q0.5 10.5 2 10.5 H8 Q9.5 10.5 9.5 9 V4 L5 0.5 L0.5 4 Z" fill="#252525" stroke="#707070" stroke-width="1"/><path d="M3 6.3 H7" stroke="#6a6a6a" stroke-width="1"/></svg><svg class="abs" style="left:58px;top:443.80px" width="10" height="11" viewBox="0 0 10 11"><path d="M0.5 9 Q0.5 10.5 2 10.5 H8 Q9.5 10.5 9.5 9 V4 L5 0.5 L0.5 4 Z" fill="#252525" stroke="#707070" stroke-width="1"/><path d="M3 6.3 H7" stroke="#6a6a6a" stroke-width="1"/></svg><svg class="abs" style="left:58px;top:475.80px" width="10" height="11" viewBox="0 0 10 11"><path d="M0.5 9 Q0.5 10.5 2 10.5 H8 Q9.5 10.5 9.5 9 V4 L5 0.5 L0.5 4 Z" fill="#252525" stroke="#707070" stroke-width="1"/><path d="M3 6.3 H7" stroke="#6a6a6a" stroke-width="1"/></svg>
  <!-- right inspection widget -->
  <svg class="abs" style="left:771px;top:6px" width="20" height="11" viewBox="0 0 20 11"><path d="M1 8 L4 0.8 L7 8 M2.2 5.4 H5.8" stroke="#5f9590" stroke-width="1.1" fill="none"/><path d="M4.5 8.2 L5.8 9.6 L11.5 5.4" stroke="#5f9590" stroke-width="1.1" fill="none"/><path d="M14.8 2.4 L16.6 1 V8.6" stroke="#6e7072" stroke-width="1.3" fill="none"/></svg>
  <svg class="abs" style="left:797px;top:6px" width="11" height="11" viewBox="0 0 11 11"><path d="M5.5 10.2 V1.5 M1.3 5.5 L5.5 1.3 L9.7 5.5" stroke="#9fd1c6" stroke-width="1.4" fill="none"/></svg>
  <svg class="abs" style="left:815px;top:6px" width="11" height="11" viewBox="0 0 11 11"><path d="M5.5 0.8 V9.5 M1.3 5.5 L5.5 9.7 L9.7 5.5" stroke="#9fd1c6" stroke-width="1.4" fill="none"/></svg>
  <div class="abs" style="left:816px;top:60px;width:1px;height:4px;background:#4d7a4a"></div>
  <div class="abs" style="left:815.5px;top:316px;width:2px;height:164px;background:#4f7d4b"></div>
  <div class="abs" style="left:824px;top:353px;width:4.5px;height:161px;border-radius:2px;background:#4c4c4c"></div>
</div>

<!-- bottom breadcrumb -->
<div class="abs" style="left:277px;top:604px;width:831px;height:20px;background:#2d2e2e;border-top:1px solid #444546"></div>
<div class="abs" style="left:0;top:622.5px;width:1108px;height:2px;background:#050505"></div>
<svg class="abs" style="left:399px;top:611px" width="4" height="6" viewBox="0 0 4 6"><path d="M1 0.8 L3 3 L1 5.2" stroke="#8a8c8e" stroke-width="1.1" fill="none"/></svg>
<svg class="abs" style="left:507px;top:611px" width="4" height="6" viewBox="0 0 4 6"><path d="M1 0.8 L3 3 L1 5.2" stroke="#8a8c8e" stroke-width="1.1" fill="none"/></svg>
</div></body></html>
